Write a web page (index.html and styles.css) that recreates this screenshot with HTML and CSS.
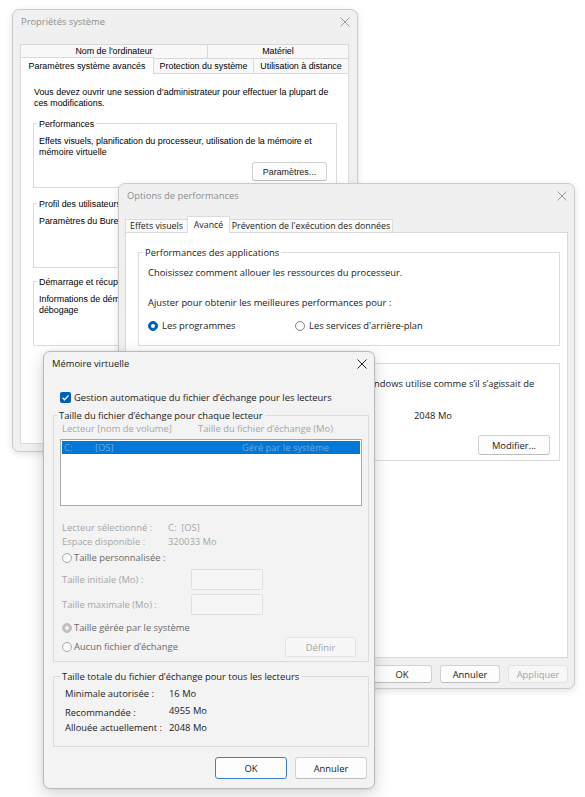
FILE: index.html
```html
<!DOCTYPE html>
<html lang="fr">
<head>
<meta charset="utf-8">
<title>Mémoire virtuelle</title>
<link rel="stylesheet" href="styles.css">
</head>
<body>
<main class="desktop">

  <!-- Propriétés système (inactive, back) -->
  <section class="win win-sys">
    <header class="titlebar">
      <span class="title">Propriétés système</span>
      <span class="close"><svg viewBox="0 0 10 10"><path d="M.5.5l9 9M9.5.5l-9 9"/></svg></span>
    </header>
    <div class="sys-body classic">
      <div class="ctabs">
        <div class="ctab-row back">
          <span class="ctab w-name">Nom de l'ordinateur</span>
          <span class="ctab w-hw">Matériel</span>
        </div>
        <div class="ctab-row front">
          <span class="ctab sel w-adv">Paramètres système avancés</span>
          <span class="ctab w-prot">Protection du système</span>
          <span class="ctab w-remote">Utilisation à distance</span>
        </div>
      </div>
      <div class="panel sys-panel">
        <p class="intro">Vous devez ouvrir une session d’administrateur pour effectuer la plupart de<br>ces modifications.</p>

        <div class="group sys-group g-perf">
          <span class="legend">Performances</span>
          <p class="g-text">Effets visuels, planification du processeur, utilisation de la mémoire et<br>mémoire virtuelle</p>
          <div class="g-actions"><button class="btn c-btn">Paramètres...</button></div>
        </div>

        <div class="group sys-group g-profile">
          <span class="legend">Profil des utilisateurs</span>
          <p class="g-text">Paramètres du Bureau liés à votre connexion</p>
          <div class="g-actions"><button class="btn c-btn">Paramètres...</button></div>
        </div>

        <div class="group sys-group g-boot">
          <span class="legend">Démarrage et récupération</span>
          <p class="g-text">Informations de démarrage du système, de défaillance du système et de<br>débogage</p>
          <div class="g-actions"><button class="btn c-btn">Paramètres...</button></div>
        </div>
      </div>
    </div>
  </section>

  <!-- Options de performances (inactive, middle) -->
  <section class="win win-perf">
    <header class="titlebar">
      <span class="title">Options de performances</span>
      <span class="close"><svg viewBox="0 0 10 10"><path d="M.5.5l9 9M9.5.5l-9 9"/></svg></span>
    </header>
    <div class="perf-body">
      <div class="mtabs">
        <span class="mtab w-fx">Effets visuels</span>
        <span class="mtab sel w-advp">Avancé</span>
        <span class="mtab w-dep">Prévention de l'exécution des données</span>
      </div>
      <div class="panel perf-panel">
        <div class="group perf-group g-apps">
          <span class="legend">Performances des applications</span>
          <p class="line l1">Choisissez comment allouer les ressources du processeur.</p>
          <p class="line l2">Ajuster pour obtenir les meilleures performances pour :</p>
          <div class="radios">
            <span class="opt"><span class="radio on"></span>Les programmes</span>
            <span class="opt"><span class="radio"></span>Les services d'arrière-plan</span>
          </div>
        </div>

        <div class="group perf-group g-vm">
          <span class="legend">Mémoire virtuelle</span>
          <p class="line l1">Un fichier d’échange est une zone du disque dur que Windows utilise comme s’il s’agissait de<br>la RAM.</p>
          <div class="total">
            <span class="total-label">Taille totale du fichier d’échange pour tous les lecteurs :</span>
            <span class="total-value">2048 Mo</span>
          </div>
          <div class="g-actions"><button class="btn m-btn">Modifier...</button></div>
        </div>
      </div>
      <div class="dlg-buttons">
        <button class="btn">OK</button>
        <button class="btn">Annuler</button>
        <button class="btn" disabled>Appliquer</button>
      </div>
    </div>
  </section>

  <!-- Mémoire virtuelle (active, front) -->
  <section class="win win-vm">
    <header class="titlebar">
      <span class="title">Mémoire virtuelle</span>
      <span class="close"><svg viewBox="0 0 10 10"><path d="M.5.5l9 9M9.5.5l-9 9"/></svg></span>
    </header>
    <div class="vm-body">
      <label class="auto">
        <span class="check"><svg viewBox="0 0 11 11"><path d="M2.6 5.7l2 2 3.9-4.3"/></svg></span>
        Gestion automatique du fichier d’échange pour les lecteurs
      </label>

      <div class="group vm-group g-drive">
        <span class="legend">Taille du fichier d’échange pour chaque lecteur</span>
        <div class="heads dis">
          <span>Lecteur [nom de volume]</span>
          <span>Taille du fichier d’échange (Mo)</span>
        </div>
        <div class="listbox">
          <div class="lrow">
            <span>C:</span>
            <span>[OS]</span>
            <span>Géré par le système</span>
          </div>
        </div>
        <div class="info dis">
          <span>Lecteur sélectionné :</span><span>C:&nbsp; [OS]</span>
          <span>Espace disponible :</span><span>320033 Mo</span>
        </div>
        <div class="ropt r-custom"><span class="radio off"></span>Taille personnalisée :</div>
        <div class="field-row fr-init dis">
          <span>Taille initiale (Mo) :</span>
          <input class="field" type="text" disabled>
        </div>
        <div class="field-row fr-max dis">
          <span>Taille maximale (Mo) :</span>
          <input class="field" type="text" disabled>
        </div>
        <div class="ropt r-sys"><span class="radio dis-on"></span>Taille gérée par le système</div>
        <div class="last-row">
          <div class="ropt"><span class="radio off"></span>Aucun fichier d’échange</div>
          <button class="btn def-btn" disabled>Définir</button>
        </div>
      </div>

      <div class="group vm-group g-total">
        <span class="legend">Taille totale du fichier d’échange pour tous les lecteurs</span>
        <div class="stat s1"><span>Minimale autorisée :</span><span>16 Mo</span></div>
        <div class="stat s2"><span class="s-lab">Recommandée :</span><span class="s-val">4955 Mo</span></div>
        <div class="stat s3"><span>Allouée actuellement :</span><span>2048 Mo</span></div>
      </div>

      <div class="dlg-buttons vm-buttons">
        <button class="btn default">OK</button>
        <button class="btn">Annuler</button>
      </div>
    </div>
  </section>

</main>
</body>
</html>
```
FILE: styles.css
```css
* { box-sizing: border-box; }

html, body { margin: 0; padding: 0; }

body {
  width: 585px;
  height: 797px;
  overflow: hidden;
  background: #fff;
  font-family: "Open Sans", "Noto Sans", "DejaVu Sans", sans-serif;
  font-size: 9.4px;
  color: #1b1b1b;
}

p { margin: 0; }

.desktop {
  position: relative;
  display: block;
  width: 585px;
  height: 797px;
}

/* ---------- window frame ---------- */
.win {
  position: absolute;
  display: flex;
  flex-direction: column;
  background: #f0f0f0;
  border: 1px solid #cbcbcb;
  border-radius: 7px;
  box-shadow: 0 2px 7px rgba(0, 0, 0, .12);
  overflow: hidden;
}
.win-sys  { left: 12px;  top: 9px;   width: 346px; height: 443px; }
.win-perf { left: 118px; top: 183px; width: 457px; height: 506px; }
.win-vm {
  left: 43px; top: 351px; width: 332px; height: 438px;
  background: #f3f3f3;
  border-color: #bababa;
  box-shadow: 0 5px 16px rgba(0, 0, 0, .18), 0 0 3px rgba(0, 0, 0, .08);
}

.titlebar {
  flex: none;
  height: 24px;
  display: flex;
  align-items: center;
  justify-content: space-between;
  padding: 0 7px 0 8px;
}
.title { line-height: 12px; color: #8e8e8e; font-size: 9.4px; }
.win-vm .title { color: #1b1b1b; }
.close { width: 10px; height: 10px; }
.close svg {
  display: block; width: 10px; height: 10px;
  fill: none; stroke: #9c9c9c; stroke-width: 1;
}
.win-vm .close svg { stroke: #222; }

/* ---------- shared controls ---------- */
.panel {
  display: flex;
  flex-direction: column;
  background: #fff;
  border: 1px solid #d9d9d9;
}

.group {
  flex: none;
  display: flex;
  flex-direction: column;
  border: 1px solid #dcdcdc;
}
.legend {
  align-self: flex-start;
  margin-top: -6px;
  padding: 0 2px;
  line-height: 12px;
  background: #fff;
  white-space: nowrap;
}
.g-actions {
  margin-top: auto;
  display: flex;
  justify-content: flex-end;
}

.btn {
  display: flex;
  align-items: center;
  justify-content: center;
  height: 19px;
  padding: 0;
  margin: 0;
  font: inherit;
  color: #1b1b1b;
  background: #fdfdfd;
  border: 1px solid #d2d2d2;
  border-bottom-color: #bdbdbd;
  border-radius: 3px;
}
.btn:disabled {
  color: #a3a3a3;
  background: #f7f7f7;
  border-color: #e3e3e3;
}
.btn.default { border-color: #3f7fc9; }

.radio {
  flex: none;
  width: 10px;
  height: 10px;
  border-radius: 50%;
  border: 1px solid #858585;
  background: #fafafa;
  display: flex;
  align-items: center;
  justify-content: center;
}
.radio.on { background: #005fb8; border-color: #005fb8; }
.radio.on::after,
.radio.dis-on::after {
  content: "";
  width: 4px;
  height: 4px;
  border-radius: 50%;
  background: #fff;
}
.radio.off { border-color: #a8a8a8; background: #fbfbfb; }
.radio.dis-on { background: #c0c0c0; border-color: #c0c0c0; }
.radio.dis-on::after { background: #f3f3f3; }

.dlg-buttons {
  flex: none;
  display: flex;
  justify-content: flex-end;
  gap: 8px;
  margin-top: 7px;
}

.dis { color: #a6a6a6; }

/* ---------- Propriétés système ---------- */
.classic {
  font-family: "Liberation Sans", Arial, sans-serif;
  font-size: 8.9px;
  color: #000;
}
.sys-body {
  flex: 1;
  display: flex;
  flex-direction: column;
  padding: 10px 8px 7px 7px;
  min-height: 0;
}
.ctabs { flex: none; }
.ctab-row { display: flex; align-items: flex-end; }
.ctab-row.back  { height: 14px; }
.ctab-row.front { height: 15px; }
.ctab {
  height: 100%;
  display: flex;
  align-items: center;
  justify-content: center;
  background: #f8f8f8;
  border: 1px solid #d9d9d9;
  border-bottom: 0;
  margin-left: -1px;
  white-space: nowrap;
  line-height: 11px;
}
.ctab:first-child { margin-left: 0; }
.ctab.sel {
  height: 17px;
  margin-bottom: -1px;
  background: #fff;
  position: relative;
}
.w-name   { width: 188px; }
.w-hw     { width: 142px; }
.w-adv    { width: 134px; }
.w-prot   { width: 101px; }
.w-remote { width: 96px; }

.sys-panel { flex: 1; padding: 0 11px 0 12px; }
.intro { margin: 13px 0 0 1px; line-height: 11px; white-space: nowrap; }
.sys-group { height: 65px; padding: 0 9px 6px 5px; }
.sys-group .legend { margin-left: -2px; }
.g-perf    { margin-top: 14px; }
.g-profile { margin-top: 15px; }
.g-boot    { margin-top: 13px; }
.g-text { margin-top: 6px; line-height: 11px; white-space: nowrap; }
.c-btn { width: 75px; }

/* ---------- Options de performances ---------- */
.perf-body {
  flex: 1;
  display: flex;
  flex-direction: column;
  padding: 8px 6px 5px 6px;
}
.mtabs {
  flex: none;
  display: flex;
  align-items: flex-end;
  height: 16px;
  font-size: 8.8px;
}
.mtab {
  height: 13px;
  display: flex;
  align-items: center;
  justify-content: center;
  background: #f9f9f9;
  border: 1px solid #dcdcdc;
  border-bottom: 0;
  margin-left: -1px;
  white-space: nowrap;
  line-height: 11px;
}
.mtab:first-child { margin-left: 0; }
.mtab.sel {
  height: 17px;
  margin-bottom: -1px;
  background: #fff;
  position: relative;
}
.w-fx   { width: 63px; }
.w-advp { width: 43px; }
.w-dep  { width: 164px; }

.perf-panel { flex: none; height: 426px; padding: 0 7px 0 12px; }
.perf-group { padding: 0 9px 10px 9px; }
.perf-group .legend { margin-left: -5px; }
.line { line-height: 13px; white-space: nowrap; }
.g-apps { margin-top: 19px; height: 94px; }
.g-apps .l1 { margin-top: 7px; }
.g-apps .l2 { margin-top: 17px; }
.radios {
  margin-top: 10px;
  height: 13px;
  display: grid;
  grid-template-columns: 147px auto;
  align-items: center;
}
.opt {
  display: flex;
  align-items: center;
  gap: 4px;
  line-height: 13px;
  white-space: nowrap;
}

/* the description and total rows of this box sit closer to its left edge */
.g-vm { margin-top: 17px; height: 98px; padding-left: 0; }
.g-vm .legend { margin-left: 4px; }
.g-vm .l1 { margin-top: 7px; text-indent: -8px; }
.total {
  margin-top: 6px;
  display: grid;
  grid-template-columns: 220px auto;
  column-gap: 55px;
  line-height: 13px;
}
.total-label { white-space: normal; }
.total-value { align-self: start; white-space: nowrap; }
.m-btn { width: 72px; height: 20px; }
.perf-body .dlg-buttons .btn { width: 60px; height: 18px; }

/* ---------- Mémoire virtuelle ---------- */
.vm-body {
  flex: 1;
  display: flex;
  flex-direction: column;
  padding: 14px 5px 9px 9px;
}
.auto {
  flex: none;
  display: flex;
  align-items: center;
  gap: 3px;
  height: 14px;
  margin-left: 7px;
  white-space: nowrap;
}
.check {
  flex: none;
  width: 11px;
  height: 11px;
  border-radius: 2px;
  background: #005fb8;
}
.check svg {
  display: block; width: 11px; height: 11px;
  fill: none; stroke: #fff; stroke-width: 1.3;
}
.vm-group { padding: 0 6px; }
.vm-group .legend { background: #f3f3f3; color: #1b1b1b; }
.g-drive { margin-top: 11px; height: 247px; }
.g-drive .legend { margin-left: -3px; }

.heads {
  margin-top: 1px;
  padding-left: 2px;
  display: grid;
  grid-template-columns: 136px auto;
  line-height: 12px;
  white-space: nowrap;
}
.listbox {
  margin-top: 4px;
  height: 67px;
  background: #fff;
  border: 1px solid #a9a9a9;
  padding: 1px;
}
.lrow {
  height: 13px;
  padding-left: 2px;
  display: grid;
  grid-template-columns: 31px 147px auto;
  line-height: 13px;
  background: #0078d7;
  color: #73a6dc;
  white-space: nowrap;
}
.info {
  margin-top: 15px;
  padding-left: 2px;
  display: grid;
  grid-template-columns: 106px auto;
  line-height: 14px;
  white-space: nowrap;
}
.ropt {
  display: flex;
  align-items: center;
  gap: 2px;
  height: 14px;
  line-height: 14px;
  padding-left: 2px;
  color: #6a6a6a;
  white-space: nowrap;
}
.r-custom { margin-top: 2px; }
.r-sys { margin-top: 6px; }
.field-row {
  height: 21px;
  padding-left: 2px;
  display: grid;
  grid-template-columns: 129px 72px;
  align-items: center;
  white-space: nowrap;
}
.fr-init, .fr-max { margin-top: 4px; }
.field {
  width: 72px;
  height: 21px;
  margin: 0;
  padding: 0;
  font: inherit;
  background: #f6f6f6;
  border: 1px solid #e0e0e0;
  border-radius: 2px;
}
.last-row {
  margin-top: 2px;
  height: 20px;
  padding-right: 6px;
  display: flex;
  align-items: center;
  justify-content: space-between;
}
.def-btn { width: 71px; height: 20px; }

.g-total { margin-top: 14px; height: 71px; padding: 0 6px 0 11px; }
.g-total .legend { margin-left: -5px; }
.stat {
  display: grid;
  grid-template-columns: 104px auto;
  line-height: 14px;
  white-space: nowrap;
}
.s1 { margin-top: 4px; }
.s2 { margin-top: 3px; height: 16px; }
.s2 .s-lab { align-self: end; }
.s2 .s-val { align-self: start; }
.s3 { margin-top: 1px; }

.vm-buttons { margin-top: 10px; padding-right: 2px; }
.vm-buttons .btn { width: 72px; height: 22px; }
```
